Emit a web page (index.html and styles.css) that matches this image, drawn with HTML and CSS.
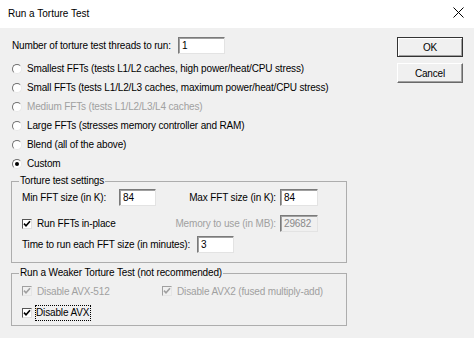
FILE: index.html
```html
<!DOCTYPE html>
<html>
<head>
<meta charset="utf-8">
<link rel="stylesheet" href="styles.css">
</head>
<body>
<div class="window">
  <div class="titlebar">
    <span class="title">Run a Torture Test</span>
    <svg class="close" width="11" height="11" viewBox="0 0 11 11"><path d="M0.5 0.5 L10.5 10.5 M10.5 0.5 L0.5 10.5" stroke="#000" stroke-width="1" fill="none"/></svg>
  </div>
  <div class="client">
    <div class="main">
      <div class="threads">
        <span class="lbl">Number of torture test threads to run:</span>
        <div class="edit threads-edit">1</div>
      </div>
      <div class="radios">
        <div class="radio-row"><span class="radio"></span><span>Smallest FFTs (tests L1/L2 caches, high power/heat/CPU stress)</span></div>
        <div class="radio-row"><span class="radio"></span><span>Small FFTs (tests L1/L2/L3 caches, maximum power/heat/CPU stress)</span></div>
        <div class="radio-row disabled"><span class="radio"></span><span>Medium FFTs (tests L1/L2/L3/L4 caches)</span></div>
        <div class="radio-row"><span class="radio"></span><span>Large FFTs (stresses memory controller and RAM)</span></div>
        <div class="radio-row"><span class="radio"></span><span>Blend (all of the above)</span></div>
        <div class="radio-row"><span class="radio checked"></span><span>Custom</span></div>
      </div>
      <fieldset class="group settings">
        <legend>Torture test settings</legend>
        <div class="srow">
          <span class="lbl c1">Min FFT size (in K):</span>
          <div class="edit e37">84</div>
          <span class="lbl rl">Max FFT size (in K):</span>
          <div class="edit e38">84</div>
        </div>
        <div class="srow row2">
          <span class="chk-item c12"><span class="check on"><svg viewBox="0 0 8 8" width="8" height="8"><path d="M1 3.6 L3 5.8 L7 1.2" stroke="#000" stroke-width="1.6" fill="none"/></svg></span><span>Run FFTs in-place</span></span>
          <span class="lbl rl dis">Memory to use (in MB):</span>
          <div class="edit e38 edit-dis">29682</div>
        </div>
        <div class="trow">
          <span class="lbl tl">Time to run each FFT size (in minutes):</span>
          <div class="edit e37">3</div>
        </div>
      </fieldset>
      <fieldset class="group weaker">
        <legend>Run a Weaker Torture Test (not recommended)</legend>
        <div class="wrow">
          <span class="chk-item dis w1"><span class="check check-dis"><svg viewBox="0 0 8 8" width="8" height="8"><path d="M1 3.6 L3 5.8 L7 1.2" stroke="#a0a0a0" stroke-width="1.6" fill="none"/></svg></span><span>Disable AVX-512</span></span>
          <span class="chk-item dis"><span class="check check-dis"><svg viewBox="0 0 8 8" width="8" height="8"><path d="M1 3.6 L3 5.8 L7 1.2" stroke="#a0a0a0" stroke-width="1.6" fill="none"/></svg></span><span>Disable AVX2 (fused multiply-add)</span></span>
        </div>
        <div class="wrow row-b">
          <span class="chk-item"><span class="check on"><svg viewBox="0 0 8 8" width="8" height="8"><path d="M1 3.6 L3 5.8 L7 1.2" stroke="#000" stroke-width="1.6" fill="none"/></svg></span><span class="focus">Disable AVX</span></span>
        </div>
      </fieldset>
    </div>
    <div class="buttons">
      <div class="btn default">OK</div>
      <div class="btn">Cancel</div>
    </div>
  </div>
</div>
</body>
</html>
```
FILE: styles.css
```css
html, body {
  margin: 0;
  padding: 0;
}
body {
  width: 474px;
  height: 338px;
  overflow: hidden;
  background: #f0f0f0;
  font-family: "Liberation Sans", Arial, sans-serif;
  font-size: 10px;
  letter-spacing: -0.15px;
  color: #000;
}
.window {
  width: 474px;
  height: 338px;
  display: flex;
  flex-direction: column;
}
.titlebar {
  height: 28px;
  background: #fff;
  display: flex;
  align-items: center;
  justify-content: space-between;
  padding: 0 10px 0 8px;
  flex: none;
}
.title {
  font-size: 10px;
  letter-spacing: 0;
  margin-top: -2px;
}
.close {
  display: block;
  margin-top: -3px;
}
.client {
  flex: 1;
  display: flex;
  padding: 9px 0 0 11px;
}
.main {
  width: 336px;
  display: flex;
  flex-direction: column;
}
.lbl {
  white-space: nowrap;
}
.threads {
  display: flex;
  align-items: center;
  height: 17px;
  padding-left: 1px;
}
.threads .lbl {
  width: 166px;
}
.edit {
  height: 17px;
  box-sizing: border-box;
  background: #fff;
  border-style: solid;
  border-width: 1px;
  border-color: #7a7a7a #e3e3e3 #e3e3e3 #7a7a7a;
  box-shadow: inset 1px 1px 0 #a0a0a0;
  padding: 1px 0 0 3px;
  line-height: 13px;
  white-space: nowrap;
}
.threads-edit {
  width: 47px;
}
.e37 { width: 37px; }
.e38 { width: 38px; }
.edit-dis {
  background: #f0f0f0;
  color: #8a8a8a;
}
.radios {
  margin-top: 5px;
  padding-left: 1px;
}
.radio-row {
  height: 19px;
  display: flex;
  align-items: center;
  white-space: nowrap;
}
.radio-row.disabled {
  color: #a0a0a0;
}
.radio {
  width: 10px;
  height: 10px;
  box-sizing: border-box;
  border-radius: 50%;
  background: #fff;
  border: 1px solid;
  border-color: #707070 #e8e8e8 #e8e8e8 #707070;
  margin-right: 5px;
  flex: none;
  display: flex;
  align-items: center;
  justify-content: center;
}
.radio.checked::after {
  content: "";
  width: 4px;
  height: 4px;
  border-radius: 50%;
  background: #000;
}
.group {
  margin: 0;
  border: 1px solid #adadad;
  padding: 0 28px 0 10px;
  min-width: 0;
}
.group legend {
  padding: 0 1px;
  margin-left: -3px;
  line-height: 12px;
}
.settings {
  margin-top: 2px;
  padding-top: 2px;
  padding-bottom: 9px;
}
.srow {
  display: grid;
  grid-template-columns: 97px 37px 1fr 38px;
  align-items: center;
  height: 17px;
}
.srow .rl {
  text-align: right;
  padding-right: 4px;
}
.row2 {
  margin-top: 9px;
}
.c12 {
  grid-column: 1 / 3;
}
.dis {
  color: #a0a0a0;
}
.chk-item {
  display: flex;
  align-items: center;
  white-space: nowrap;
}
.check {
  width: 10px;
  height: 10px;
  box-sizing: border-box;
  background: #fff;
  border: 1px solid;
  border-color: #555 #e0e0e0 #e0e0e0 #555;
  margin-right: 5px;
  display: flex;
  align-items: center;
  justify-content: center;
  flex: none;
}
.check svg {
  display: block;
}
.check-dis {
  background: #f0f0f0;
  border-color: #a0a0a0 #e6e6e6 #e6e6e6 #a0a0a0;
}
.trow {
  display: flex;
  align-items: center;
  height: 17px;
  margin-top: 4px;
}
.trow .tl {
  width: 175px;
}
.weaker {
  margin-top: 4px;
  padding-top: 4px;
  padding-bottom: 4px;
}
.wrow {
  display: grid;
  grid-template-columns: 140px auto;
  align-items: center;
  height: 16px;
}
.row-b {
  margin-top: 6px;
}
.focus {
  outline: 1px dotted #000;
  outline-offset: 0;
  padding: 0 1px 0 0;
  margin-left: -1px;
  line-height: 14px;
}
.buttons {
  margin-left: 50px;
  display: flex;
  flex-direction: column;
  gap: 6px;
}
.btn {
  width: 66px;
  height: 20px;
  box-sizing: border-box;
  display: flex;
  align-items: center;
  justify-content: center;
  background: #f0f0f0;
  border: 1px solid;
  border-color: #fff #696969 #696969 #fff;
  box-shadow: inset -1px -1px 0 #a0a0a0;
}
.btn.default {
  border-color: #333;
  box-shadow: inset 1px 1px 0 #fff, inset -1px -1px 0 #a0a0a0;
}
```
